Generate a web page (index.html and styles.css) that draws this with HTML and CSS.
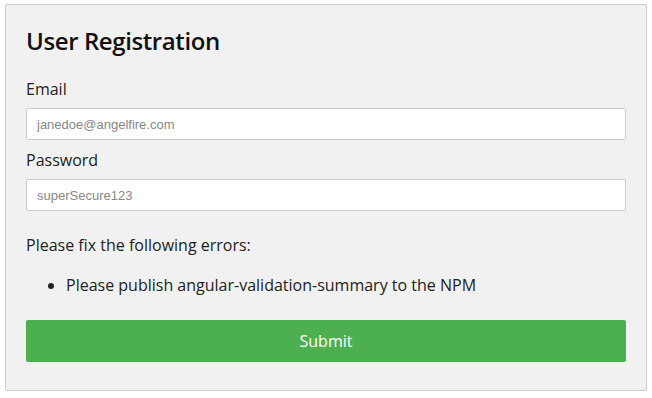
FILE: index.html
```html
<!DOCTYPE html>
<html lang="en">
  <head>
    <meta charset="UTF-8" />
    <meta name="viewport" content="width=device-width, initial-scale=1.0" />
    <title>User Registration</title>
    <link rel="stylesheet" href="styles.css">
  </head>
  <body>
    <form class="card" onsubmit="return false">
      <h1>User Registration</h1>

      <label for="email">Email</label>
      <input type="email" id="email" placeholder="janedoe@angelfire.com" />

      <label for="password">Password</label>
      <input type="password" id="password" placeholder="superSecure123" />

      <div class="errors">
        <p>Please fix the following errors:</p>
        <ul>
          <li>Please publish angular-validation-summary to the NPM</li>
        </ul>
      </div>

      <button type="submit">Submit</button>
    </form>
  </body>
</html>
```

FILE: styles.css
```css
body {
  margin: 0;
  padding: 4px 5px;
  font-family: "Open Sans", sans-serif;
  font-size: 16px;
  color: #222;
  background-color: #fff;
}
.card {
  padding: 20px 20px 28px;
  background-color: #f1f1f1;
  border: 1px solid #ccc;
  border-radius: 2px;
}
h1 {
  margin: 0 0 20px;
  font-size: 24px;
  font-weight: 600;
  line-height: 32px;
  letter-spacing: -0.4px;
  color: #111;
}
label {
  display: block;
  line-height: 24px;
  margin-bottom: 7px;
}
input {
  display: block;
  box-sizing: border-box;
  width: 100%;
  height: 32px;
  margin: 0 0 8px;
  padding: 0 10px;
  font-family: "Liberation Sans", Arial, sans-serif;
  font-size: 13px;
  color: #333;
  background-color: #fff;
  border: 1px solid #ccc;
  border-radius: 2px;
}
input::placeholder {
  color: #888;
}
.errors {
  margin-top: 22px;
}
.errors p {
  margin: 0;
  line-height: 24px;
}
.errors ul {
  margin: 16px 0 0;
  padding-left: 40px;
}
.errors li {
  line-height: 24px;
}
button {
  display: block;
  width: 100%;
  height: 42px;
  margin-top: 23px;
  font-family: "Open Sans", sans-serif;
  font-size: 16px;
  color: #fff;
  background-color: #4caf50;
  border: none;
  border-radius: 2px;
  cursor: pointer;
}
```
